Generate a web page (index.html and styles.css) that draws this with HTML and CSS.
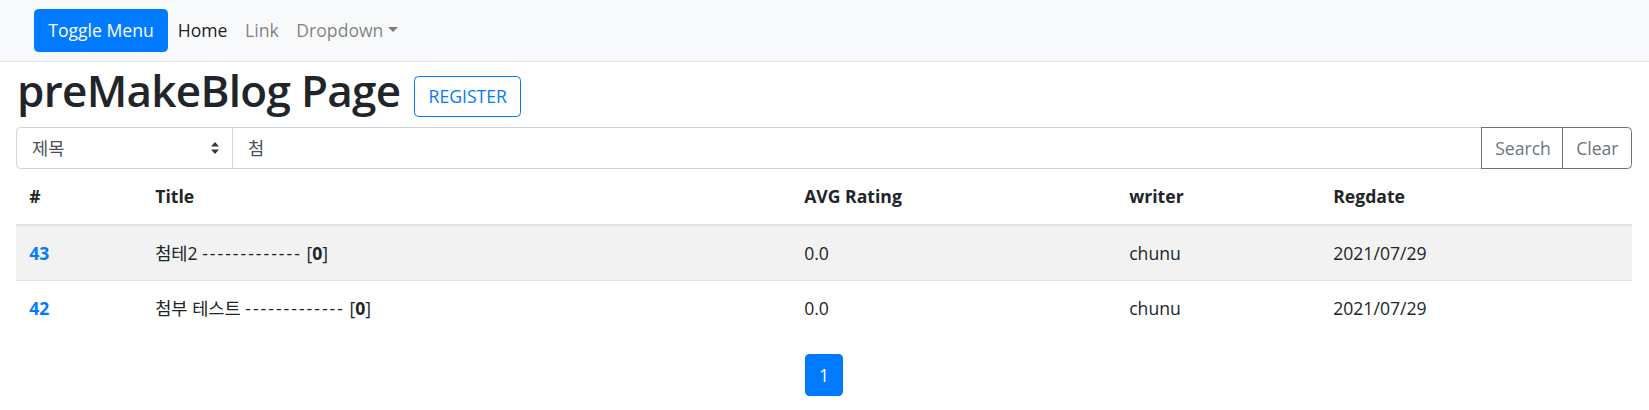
FILE: index.html
```html
<!DOCTYPE html>
<html lang="ko">
<head>
<meta charset="utf-8">
<title>preMakeBlog Page</title>
<link rel="stylesheet" href="styles.css">
</head>
<body>
<nav class="navbar">
  <button class="btn btn-primary" type="button">Toggle Menu</button>
  <a class="nav-link active" href="#">Home</a>
  <a class="nav-link" href="#">Link</a>
  <a class="nav-link dropdown-toggle" href="#">Dropdown</a>
</nav>
<div class="container">
  <div class="title-row">
    <h1 class="page-title">preMakeBlog Page</h1>
    <button class="btn btn-outline-primary register" type="button">REGISTER</button>
  </div>
  <form class="input-group">
    <div class="custom-select">
      <span>제목</span>
      <svg class="select-arrows" width="8" height="12" viewBox="0 0 8 12"><path d="M4 0L0 4.6h8z M4 12L0 7.4h8z" fill="#343a40"/></svg>
    </div>
    <div class="form-control">첨</div>
    <button class="btn btn-outline-secondary search" type="button">Search</button>
    <button class="btn btn-outline-secondary clear" type="button">Clear</button>
  </form>
  <table class="table">
    <colgroup>
      <col class="c-num"><col class="c-title"><col class="c-avg"><col class="c-writer"><col>
    </colgroup>
    <thead>
      <tr><th>#</th><th>Title</th><th>AVG Rating</th><th>writer</th><th>Regdate</th></tr>
    </thead>
    <tbody>
      <tr class="striped">
        <td><a class="num" href="#">43</a></td>
        <td>첨테2 <span class="dashes">-------------</span> [<b>0</b>]</td>
        <td>0.0</td>
        <td>chunu</td>
        <td>2021/07/29</td>
      </tr>
      <tr>
        <td><a class="num" href="#">42</a></td>
        <td>첨부 테스트 <span class="dashes">-------------</span> [<b>0</b>]</td>
        <td>0.0</td>
        <td>chunu</td>
        <td>2021/07/29</td>
      </tr>
    </tbody>
  </table>
  <ul class="pagination">
    <li class="page-item active"><a class="page-link" href="#">1</a></li>
  </ul>
</div>
</body>
</html>
```

FILE: styles.css
```css
* { box-sizing: border-box; }
html, body { margin: 0; padding: 0; }
body {
  background: #fff;
  color: #212529;
  font-family: "Open Sans", "Noto Sans CJK KR", sans-serif;
  font-size: 17.6px;
  line-height: 1.5;
}
a { text-decoration: none; }

.navbar {
  display: flex;
  align-items: center;
  height: 62px;
  padding: 0 0 1px 34px;
  background: #f8f9fa;
  border-bottom: 1px solid #dee2e6;
}
.btn {
  font-family: inherit;
  font-size: 17.6px;
  line-height: 1.5;
  border: 1px solid transparent;
  border-radius: 4.4px;
  padding: 0 13.2px;
  cursor: pointer;
  background: transparent;
}
.btn-primary {
  height: 43px;
  background: #007bff;
  border-color: #007bff;
  color: #fff;
}
.nav-link {
  padding: 0 8.8px;
  color: rgba(0, 0, 0, .5);
}
.nav-link.active { color: rgba(0, 0, 0, .9); margin-left: 1px; }
.dropdown-toggle::after {
  content: "";
  display: inline-block;
  margin-left: 4.5px;
  vertical-align: 4.5px;
  border-top: 5.3px solid;
  border-right: 5.3px solid transparent;
  border-left: 5.3px solid transparent;
}

.container { padding: 0 17px 0 16px; }

.title-row {
  display: flex;
  align-items: flex-start;
  margin-top: 2px;
  margin-bottom: 10px;
}
.page-title {
  margin: 0;
  font-size: 44px;
  font-weight: 600;
  line-height: 52.8px;
  padding-left: 1px;
  letter-spacing: -0.7px;
}
.register {
  margin: 12px 0 0 14px;
  height: 41px;
  color: #007bff;
  border-color: #007bff;
}

.input-group {
  display: flex;
  height: 42px;
  margin: 0;
}
.custom-select {
  width: 217px;
  display: flex;
  align-items: center;
  justify-content: space-between;
  padding: 0 13px 0 15px;
  border: 1px solid #ced4da;
  border-radius: 4.4px 0 0 4.4px;
  color: #495057;
}
.select-arrows { display: block; }
.form-control {
  flex: 1;
  display: flex;
  align-items: center;
  margin-left: -1px;
  padding: 0 15px;
  border: 1px solid #ced4da;
  color: #495057;
}
.btn-outline-secondary {
  height: 42px;
  color: #6c757d;
  border-color: #6c757d;
  border-radius: 0;
}
.search { width: 82px; margin-left: -1px; }
.clear { width: 70px; margin-left: -1px; border-radius: 0 4.4px 4.4px 0; }

.table {
  width: 100%;
  border-collapse: collapse;
  table-layout: fixed;
  margin: 0 0 19px;
}
.c-num { width: 126px; }
.c-title { width: 649px; }
.c-avg { width: 325px; }
.c-writer { width: 204px; }
.table th, .table td {
  text-align: left;
  line-height: 27px;
  padding: 13.5px 13.2px;
  border-top: 1px solid #dee2e6;
  vertical-align: top;
}
.table th {
  font-weight: 700;
  padding: 14px 13.2px 14px;
  border-top: 0;
  border-bottom: 2px solid #dee2e6;
}
.striped td { background: #f2f2f2; }
.num { color: #007bff; font-weight: 700; }
.dashes { letter-spacing: 2px; }

.pagination {
  list-style: none;
  display: flex;
  justify-content: center;
  margin: 0;
  padding: 0;
}
.page-link {
  display: flex;
  align-items: center;
  justify-content: center;
  width: 38px;
  height: 42px;
  border-radius: 4.4px;
  background: #007bff;
  color: #fff;
  line-height: 1.25;
}
```
